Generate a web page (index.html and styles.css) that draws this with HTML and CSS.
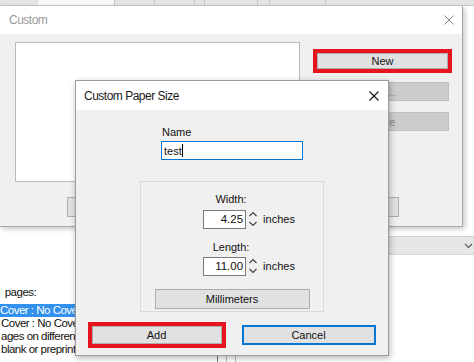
FILE: index.html
```html
<!DOCTYPE html>
<html>
<head>
<meta charset="utf-8">
<link rel="stylesheet" href="styles.css">
</head>
<body>
<div class="screen">
  <div class="tabstrip">
    <span class="seg s1"></span>
    <span class="seg s2 active"></span>
    <span class="seg s3"></span>
    <span class="seg s4"></span>
    <span class="seg s5"></span>
    <span class="seg s6"></span>
    <span class="seg s7"></span>
    <span class="seg s8"></span>
    <span class="seg s9"></span>
  </div>

  <div class="bg-left">
    <div class="bg-caption">&nbsp;pages:</div>
    <div class="bg-list">
      <div class="bg-row selected">Cover : No Cover</div>
      <div class="bg-row">Cover : No Cover</div>
      <div class="bg-row">ages on different</div>
      <div class="bg-row">blank or preprinted</div>
    </div>
  </div>

  <div class="bg-dropdown">
    <svg class="chev" width="9" height="6" viewBox="0 0 9 6"><path d="M1 1 L4.5 4.5 L8 1" fill="none" stroke="#555" stroke-width="1.1"/></svg>
  </div>
  <div class="bg-ticks"><span></span><span></span><span></span></div>

  <div class="win custom">
    <div class="titlebar inactive">
      <span class="title">Custom</span>
      <svg class="close" width="10" height="10" viewBox="0 0 10 10"><path d="M0.5 0.5 L9.5 9.5 M9.5 0.5 L0.5 9.5" stroke="#8a8a8a" stroke-width="1"/></svg>
    </div>
    <div class="custom-body">
      <div class="listbox"></div>
      <div class="custom-right">
        <div class="redframe new-frame"><div class="btn fill">New</div></div>
        <div class="btn disabled side">Edit...</div>
        <div class="btn disabled side shifted">Delete</div>
      </div>
      <div class="custom-btnrow">
        <div class="btn wide">OK</div>
        <div class="btn wide">Close</div>
      </div>
    </div>
  </div>

  <div class="win cps">
    <div class="titlebar">
      <span class="title dark">Custom Paper Size</span>
      <svg class="close" width="10" height="10" viewBox="0 0 10 10"><path d="M0.5 0.5 L9.5 9.5 M9.5 0.5 L0.5 9.5" stroke="#111" stroke-width="1.1"/></svg>
    </div>
    <div class="cps-body">
      <div class="name-label">Name</div>
      <div class="name-input">test<span class="caret"></span></div>
      <div class="group">
        <div class="field-label">Width:</div>
        <div class="field-row">
          <div class="num">4.25</div>
          <svg class="spin" width="10" height="20" viewBox="0 0 10 20"><path d="M1.5 7 L5 3.5 L8.5 7 M1.5 13 L5 16.5 L8.5 13" fill="none" stroke="#444" stroke-width="1.2"/></svg>
          <span class="unit">inches</span>
        </div>
        <div class="field-label second">Length:</div>
        <div class="field-row tight">
          <div class="num">11.00</div>
          <svg class="spin" width="10" height="20" viewBox="0 0 10 20"><path d="M1.5 7 L5 3.5 L8.5 7 M1.5 13 L5 16.5 L8.5 13" fill="none" stroke="#444" stroke-width="1.2"/></svg>
          <span class="unit">inches</span>
        </div>
        <div class="btn mm">Millimeters</div>
      </div>
      <div class="cps-btnrow">
        <div class="redframe add-frame"><div class="btn fill">Add</div></div>
        <div class="btn cancel">Cancel</div>
      </div>
    </div>
  </div>
</div>
</body>
</html>
```

FILE: styles.css
```css
* { box-sizing: border-box; }
html, body { margin: 0; padding: 0; }
body {
  width: 474px;
  height: 362px;
  overflow: hidden;
  background: #ffffff;
  font-family: "Liberation Sans", Arial, sans-serif;
  font-size: 11px;
  color: #111;
}
.screen { position: relative; width: 474px; height: 362px; overflow: hidden; }

/* background application */
.tabstrip {
  display: flex;
  height: 6px;
  background: #e4e4e4;
  border-bottom: 1px solid #c9c9c9;
}
.seg { height: 100%; border-right: 1px solid #c4c4c4; }
.seg.active { background: #f7f7f7; }
.s1 { width: 38px; border-right: none; }
.s2 { width: 77px; }
.s3 { width: 40px; }
.s4 { width: 40px; }
.s5 { width: 10px; }
.s6 { width: 53px; }
.s7 { width: 12px; }
.s8 { width: 56px; }
.s9 { flex: 1; border-right: none; }

.bg-left { position: absolute; left: 0; top: 286px; width: 80px; line-height: 13px; font-size: 11.5px; letter-spacing: -0.5px; color: #111; }
.bg-caption { height: 13px; margin-bottom: 5px; padding-left: 2px; }
.bg-row { height: 13px; padding-left: 1px; white-space: nowrap; }
.bg-row.selected { background: #3391ee; color: #fff; text-indent: -1px; }

.bg-dropdown {
  position: absolute; left: 300px; top: 236px; width: 174px; height: 19px;
  background: #e6e6e6; border-top: 1px solid #cfcfcf; border-bottom: 1px solid #d8d8d8;
  display: flex; align-items: center; justify-content: flex-end; padding-right: 1px;
}
.bg-ticks { position: absolute; left: 217px; top: 355px; display: flex; gap: 8px; height: 7px; }
.bg-ticks span { width: 1px; height: 7px; background: #777; }
.bg-ticks span + span { background: #bbb; }

/* windows */
.win { position: absolute; background: #f0f0f0; }
.titlebar {
  background: #fff;
  display: flex; align-items: center; justify-content: space-between;
}
.title { font-size: 12px; letter-spacing: -0.5px; color: #9a9a9a; }
.title.dark { color: #1a1a1a; }

.custom {
  left: 0; top: 6px; width: 463px; height: 221px;
  border-right: 1px solid #a8a8a8; border-bottom: 1px solid #a8a8a8;
  box-shadow: 2px 2px 5px rgba(0,0,0,0.22);
}
.custom .titlebar { height: 28px; padding: 0 8px 0 9px; }
.custom-body {
  display: grid;
  grid-template-columns: 285px 139px;
  column-gap: 13px;
  align-items: start;
  padding: 8px 0 0 15px;
}
.listbox { width: 285px; height: 140px; background: #fff; border: 1px solid #b9b9b9; }
.custom-btnrow {
  grid-column: 1 / 3;
  display: flex; justify-content: space-between;
  margin-top: 15px; padding-left: 52px; width: 384px;
}
.custom-right { display: flex; flex-direction: column; align-items: center; padding-top: 7px; }

.btn {
  display: flex; align-items: center; justify-content: center;
  background: #e1e1e1; border: 1px solid #adadad; color: #111;
  white-space: nowrap;
}
.btn.wide { width: 110px; height: 20px; }
.btn.disabled { background: #cccccc; border-color: #bfbfbf; color: #8a8a8a; }
.btn.side { width: 132px; height: 19px; margin-top: 9px; }
.btn.side + .btn.side { margin-top: 11px; }
.btn.shifted { padding-right: 6px; }
.redframe { border: 4px solid #e5141f; background: #e1e1e1; }
.btn.fill { width: 100%; height: 100%; }
.new-frame { width: 139px; height: 24px; }

.cps {
  left: 75px; top: 80px; width: 314px; height: 276px;
  border: 1px solid #9c9c9c;
  box-shadow: 1px 2px 6px rgba(0,0,0,0.3);
}
.cps .titlebar { height: 29px; padding: 0 9px 0 8px; }
.cps-body { display: flex; flex-direction: column; align-items: center; padding-top: 16px; }
.name-label { width: 142px; height: 13px; line-height: 13px; padding-left: 1px; }
.name-input {
  width: 142px; height: 19px; margin-top: 2px;
  background: #fff; border: 1px solid #0078d7;
  display: flex; align-items: center; padding-left: 2px;
}
.caret { width: 1px; height: 13px; background: #000; }
.group {
  width: 184px; height: 131px; margin-top: 21px;
  border: 1px solid #dadada;
  display: flex; flex-direction: column; align-items: center;
  padding-top: 11px;
}
.field-label { height: 12px; line-height: 12px; margin-left: -2px; }
.field-label.second { margin-top: 12px; }
.field-row { display: flex; align-items: center; margin-top: 4px; margin-left: 34px; }
.field-row.tight { margin-top: 3px; }
.num {
  width: 43px; height: 19px; background: #fff; border: 1px solid #7a7a7a;
  display: flex; align-items: center; justify-content: flex-end; padding-right: 2px;
  font-size: 11.5px;
}
.spin { margin-left: 2px; }
.unit { margin-left: 5px; }
.btn.mm { width: 155px; height: 20px; margin-top: 13px; }
.cps-btnrow { display: flex; align-items: center; gap: 16px; margin-top: 10px; margin-left: -1px; }
.add-frame { width: 138px; height: 26px; }
.btn.cancel { width: 134px; height: 20px; border: 2px solid #0078d7; }
```
